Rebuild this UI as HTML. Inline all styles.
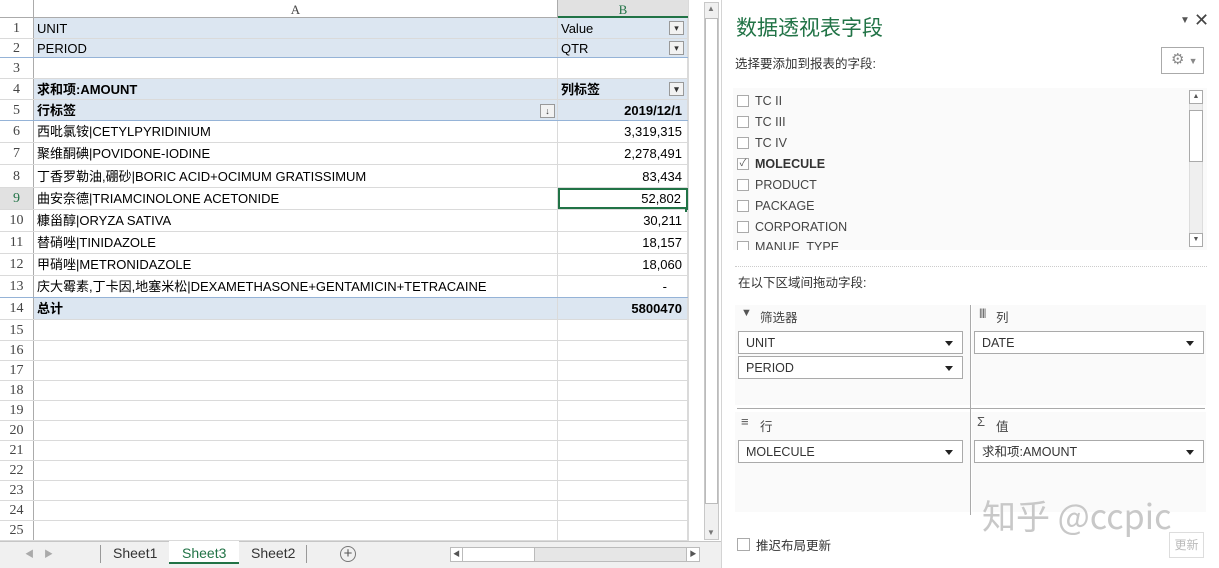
<!DOCTYPE html>
<html><head><meta charset="utf-8"><style>
*{margin:0;padding:0;box-sizing:border-box}
body{width:1219px;height:568px;overflow:hidden;background:#fff;font-family:"Liberation Sans","Noto Sans CJK SC",sans-serif;font-size:13px;color:#000;position:relative}
.abs{position:absolute}
.r{position:absolute;left:0;width:688px;border-bottom:1px solid #dadada}
.n{position:absolute;left:0;width:34px;top:0;bottom:0;background:#fff;color:#444;font-size:14px;text-align:center;border-right:1px solid #ababab;line-height:inherit;font-family:"Liberation Serif",serif}
.a{position:absolute;left:34px;width:524px;top:0;bottom:0;border-right:1px solid #dadada;padding-left:3px;white-space:nowrap}
.b{position:absolute;left:558px;width:130px;top:0;bottom:0;border-right:1px solid #dadada;padding-right:5px;text-align:right}
.hl .a,.hl .b{background:#dce6f1}
.bold{font-weight:bold}
.fb{position:absolute;right:3px;top:3px;width:15px;height:14px;border:1px solid #999;background:#f2f2f2;font-size:9px;line-height:12px;text-align:center;color:#333}
.chk{position:absolute;left:737px;width:12px;height:12px;border:1px solid #aaa;background:#fff}
.fl{position:absolute;left:755px;font-size:12.5px;color:#444}
.dd{position:absolute;height:23px;border:1px solid #aaa;background:#fff;font-size:12.5px;color:#333;padding-left:7px;line-height:22px}
.dd:after{content:"";position:absolute;right:9px;top:9px;border-left:4px solid transparent;border-right:4px solid transparent;border-top:5px solid #222}
</style></head><body>
<div class="abs" style="left:0;top:0;width:700px;height:18px;background:#fff;border-bottom:1px solid #ababab"></div>
<div class="abs" style="left:0;top:0;width:34px;height:18px;border-right:1px solid #ababab"></div>
<div class="abs" style="left:34px;top:0;width:524px;height:18px;text-align:center;font-family:'Liberation Serif',serif;color:#444;line-height:20px;border-right:1px solid #ababab">A</div>
<div class="abs" style="left:558px;top:0;width:130px;height:18px;text-align:center;font-family:'Liberation Serif',serif;color:#217346;background:#e1e1e1;border-bottom:2px solid #217346;line-height:20px">B</div>

<div class="r hl" style="top:18px;height:21px;line-height:21px"><div class="n">1</div><div class="a">UNIT</div><div class="b" style="text-align:left;padding-left:3px">Value<span class="fb">▾</span></div></div>
<div class="r hl" style="top:39px;height:19px;line-height:19px;border-bottom-color:#95b3d7"><div class="n">2</div><div class="a">PERIOD</div><div class="b" style="text-align:left;padding-left:3px">QTR<span class="fb" style="top:2px">▾</span></div></div>
<div class="r" style="top:58px;height:21px;line-height:21px"><div class="n">3</div><div class="a"></div><div class="b"></div></div>
<div class="r hl bold" style="top:79px;height:21px;line-height:21px"><div class="n" style="font-weight:normal">4</div><div class="a">求和项:AMOUNT</div><div class="b" style="text-align:left;padding-left:3px">列标签<span class="fb">▾</span></div></div>
<div class="r hl bold" style="top:100px;height:21px;line-height:21px;border-bottom-color:#95b3d7"><div class="n" style="font-weight:normal">5</div><div class="a">行标签<span class="fb" style="right:2px;top:4px;font-weight:normal">↓</span></div><div class="b">2019/12/1</div></div>
<div class="r" style="top:121px;height:22px;line-height:22px"><div class="n">6</div><div class="a">西吡氯铵|CETYLPYRIDINIUM</div><div class="b">3,319,315</div></div>
<div class="r" style="top:143px;height:22px;line-height:22px"><div class="n">7</div><div class="a">聚维酮碘|POVIDONE-IODINE</div><div class="b">2,278,491</div></div>
<div class="r" style="top:165px;height:23px;line-height:23px"><div class="n">8</div><div class="a">丁香罗勒油,硼砂|BORIC ACID+OCIMUM GRATISSIMUM</div><div class="b">83,434</div></div>
<div class="r" style="top:188px;height:22px;line-height:22px"><div class="n" style="background:#e1e1e1;color:#217346">9</div><div class="a">曲安奈德|TRIAMCINOLONE ACETONIDE</div><div class="b" style="border:2px solid #217346;line-height:18px">52,802</div></div>
<div class="abs" style="left:685px;top:207px;width:5px;height:5px;background:#217346"></div>
<div class="r" style="top:210px;height:22px;line-height:22px"><div class="n">10</div><div class="a">糠甾醇|ORYZA SATIVA</div><div class="b">30,211</div></div>
<div class="r" style="top:232px;height:22px;line-height:22px"><div class="n">11</div><div class="a">替硝唑|TINIDAZOLE</div><div class="b">18,157</div></div>
<div class="r" style="top:254px;height:22px;line-height:22px"><div class="n">12</div><div class="a">甲硝唑|METRONIDAZOLE</div><div class="b">18,060</div></div>
<div class="r" style="top:276px;height:22px;line-height:22px;border-bottom-color:#95b3d7"><div class="n">13</div><div class="a">庆大霉素,丁卡因,地塞米松|DEXAMETHASONE+GENTAMICIN+TETRACAINE</div><div class="b" style="padding-right:20px">-</div></div>
<div class="r hl bold" style="top:298px;height:22px;line-height:22px"><div class="n" style="font-weight:normal">14</div><div class="a">总计</div><div class="b">5800470</div></div>
<div class="r" style="top:320px;height:21px;line-height:21px"><div class="n">15</div><div class="a"></div><div class="b"></div></div>
<div class="r" style="top:341px;height:20px;line-height:20px"><div class="n">16</div><div class="a"></div><div class="b"></div></div>
<div class="r" style="top:361px;height:20px;line-height:20px"><div class="n">17</div><div class="a"></div><div class="b"></div></div>
<div class="r" style="top:381px;height:20px;line-height:20px"><div class="n">18</div><div class="a"></div><div class="b"></div></div>
<div class="r" style="top:401px;height:20px;line-height:20px"><div class="n">19</div><div class="a"></div><div class="b"></div></div>
<div class="r" style="top:421px;height:20px;line-height:20px"><div class="n">20</div><div class="a"></div><div class="b"></div></div>
<div class="r" style="top:441px;height:20px;line-height:20px"><div class="n">21</div><div class="a"></div><div class="b"></div></div>
<div class="r" style="top:461px;height:20px;line-height:20px"><div class="n">22</div><div class="a"></div><div class="b"></div></div>
<div class="r" style="top:481px;height:20px;line-height:20px"><div class="n">23</div><div class="a"></div><div class="b"></div></div>
<div class="r" style="top:501px;height:20px;line-height:20px"><div class="n">24</div><div class="a"></div><div class="b"></div></div>
<div class="r" style="top:521px;height:20px;line-height:20px"><div class="n">25</div><div class="a"></div><div class="b"></div></div>

<div class="abs" style="left:688px;top:0;width:34px;height:541px;background:#fff;border-left:1px solid #dadada"></div>
<div class="abs" style="left:704px;top:2px;width:15px;height:538px;background:#f0f0f0;border:1px solid #c8c8c8"></div>
<div class="abs" style="left:705px;top:18px;width:13px;height:486px;background:#fff;border:1px solid #bbb"></div>
<div class="abs" style="left:707px;top:4px;font-size:8px;color:#777">▲</div>
<div class="abs" style="left:707px;top:528px;font-size:8px;color:#777">▼</div>
<div class="abs" style="left:721px;top:0;width:1px;height:568px;background:#d4d4d4"></div>

<div class="abs" style="left:0;top:541px;width:721px;height:27px;background:#f0f0f0;border-top:1px solid #c6c6c6"></div>
<div class="abs" style="left:25px;top:547px;font-size:9px;color:#aaa">◀ &nbsp;&nbsp; ▶</div>
<div class="abs" style="left:100px;top:545px;width:1px;height:18px;background:#999"></div>
<div class="abs" style="left:113px;top:545px;font-size:14px;color:#333">Sheet1</div>
<div class="abs" style="left:169px;top:541px;width:70px;height:23px;background:#fff;border-bottom:2px solid #217346"></div>
<div class="abs" style="left:182px;top:545px;font-size:14px;color:#217346">Sheet3</div>
<div class="abs" style="left:251px;top:545px;font-size:14px;color:#333">Sheet2</div>
<div class="abs" style="left:306px;top:545px;width:1px;height:18px;background:#999"></div>
<div class="abs" style="left:340px;top:546px;width:16px;height:16px;border:1px solid #777;border-radius:50%;text-align:center;line-height:13px;font-size:15px;color:#555">+</div>
<div class="abs" style="left:450px;top:547px;width:250px;height:15px;background:#e6e6e6;border:1px solid #bbb"></div>
<div class="abs" style="left:451px;top:548px;width:12px;height:13px;background:#fff;border-right:1px solid #bbb;font-size:7px;line-height:13px;text-align:center;color:#555">◀</div>
<div class="abs" style="left:463px;top:548px;width:72px;height:13px;background:#fff;border-right:1px solid #bbb"></div>
<div class="abs" style="left:686px;top:548px;width:13px;height:13px;background:#fff;border-left:1px solid #bbb;font-size:7px;line-height:13px;text-align:center;color:#555">▶</div>

<div class="abs" style="left:736px;top:12px;font-size:21px;color:#217346">数据透视表字段</div>
<div class="abs" style="left:1180px;top:15px;font-size:10px;color:#555">▼</div>
<div class="abs" style="left:1194px;top:10px;font-size:18px;color:#444">✕</div>
<div class="abs" style="left:735px;top:53px;font-size:12.5px;color:#333">选择要添加到报表的字段:</div>
<div class="abs" style="left:1161px;top:47px;width:43px;height:27px;border:1px solid #aaa;color:#888;font-size:15px;line-height:24px;padding-left:9px">⚙ <span style="font-size:9px">▼</span></div>
<div class="abs" style="left:733px;top:88px;width:474px;height:162px;background:#fafafa;overflow:hidden"></div>
<div class="abs" style="left:1189px;top:90px;width:14px;height:157px;background:#efefef;border:1px solid #ddd"></div>
<div class="abs" style="left:1189px;top:90px;width:14px;height:14px;background:#fff;border:1px solid #aaa;font-size:7px;text-align:center;line-height:12px;color:#555">▲</div>
<div class="abs" style="left:1189px;top:110px;width:14px;height:52px;background:#fff;border:1px solid #aaa"></div>
<div class="abs" style="left:1189px;top:233px;width:14px;height:14px;background:#fff;border:1px solid #aaa;font-size:7px;text-align:center;line-height:12px;color:#555">▼</div>
<div class="chk" style="top:95px"></div><div class="fl" style="top:94px">TC II</div>
<div class="chk" style="top:116px"></div><div class="fl" style="top:115px">TC III</div>
<div class="chk" style="top:137px"></div><div class="fl" style="top:136px">TC IV</div>
<div class="chk" style="top:158px;font-size:10px;line-height:10px;color:#555;text-align:center">✓</div><div class="fl" style="top:157px;font-weight:bold;color:#333">MOLECULE</div>
<div class="chk" style="top:179px"></div><div class="fl" style="top:178px">PRODUCT</div>
<div class="chk" style="top:200px"></div><div class="fl" style="top:199px">PACKAGE</div>
<div class="chk" style="top:221px"></div><div class="fl" style="top:220px">CORPORATION</div>
<div class="abs" style="left:733px;top:241px;width:455px;height:9px;overflow:hidden"><div class="chk" style="left:4px;top:0"></div><div class="fl" style="left:22px;top:-1px">MANUF_TYPE</div></div>
<div class="abs" style="left:735px;top:266px;width:472px;border-top:1px dotted #ccc"></div>
<div class="abs" style="left:738px;top:272px;font-size:12.5px;color:#333">在以下区域间拖动字段:</div>

<div class="abs" style="left:735px;top:305px;width:236px;height:100px;background:#fafafa"></div>
<div class="abs" style="left:972px;top:305px;width:234px;height:100px;background:#fafafa"></div>
<div class="abs" style="left:735px;top:412px;width:236px;height:100px;background:#fafafa"></div>
<div class="abs" style="left:972px;top:412px;width:234px;height:100px;background:#fafafa"></div>
<div class="abs" style="left:970px;top:305px;width:1px;height:210px;background:#aaa"></div>
<div class="abs" style="left:737px;top:408px;width:468px;height:1px;background:#aaa"></div>

<div class="abs" style="left:741px;top:307px;font-size:11px;color:#555">▼</div>
<div class="abs" style="left:760px;top:307px;font-size:12.5px;color:#444">筛选器</div>
<div class="abs" style="left:979px;top:308px;font-size:10px;color:#555;letter-spacing:-1px">||||</div>
<div class="abs" style="left:996px;top:307px;font-size:12.5px;color:#444">列</div>
<div class="abs" style="left:741px;top:414px;font-size:13px;color:#555">≡</div>
<div class="abs" style="left:760px;top:416px;font-size:12.5px;color:#444">行</div>
<div class="abs" style="left:977px;top:414px;font-size:13px;color:#555">Σ</div>
<div class="abs" style="left:996px;top:416px;font-size:12.5px;color:#444">值</div>

<div class="dd" style="left:738px;top:331px;width:225px">UNIT</div>
<div class="dd" style="left:738px;top:356px;width:225px">PERIOD</div>
<div class="dd" style="left:974px;top:331px;width:230px">DATE</div>
<div class="dd" style="left:738px;top:440px;width:225px">MOLECULE</div>
<div class="dd" style="left:974px;top:440px;width:230px">求和项:AMOUNT</div>

<div class="abs" style="left:982px;top:490px;font-size:34px;color:#c8c8c8;font-family:'Noto Sans CJK SC','Liberation Sans',sans-serif">知乎 @ccpic</div>

<div class="chk" style="top:538px;width:13px;height:13px"></div>
<div class="abs" style="left:756px;top:535px;font-size:12.5px;color:#333">推迟布局更新</div>
<div class="abs" style="left:1169px;top:532px;width:35px;height:26px;border:1px solid #ddd;font-size:12px;color:#bbb;text-align:center;line-height:24px">更新</div>
</body></html>
